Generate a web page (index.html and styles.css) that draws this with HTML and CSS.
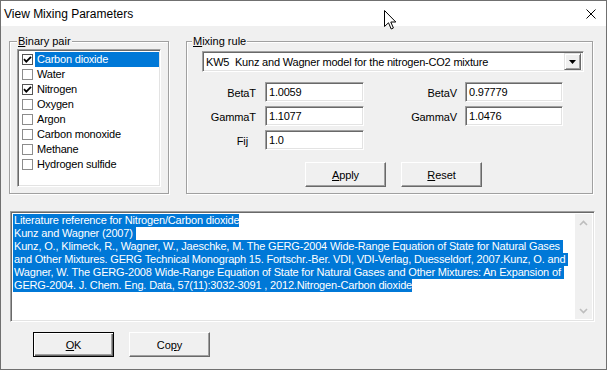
FILE: index.html
```html
<!DOCTYPE html>
<html>
<head>
<meta charset="utf-8">
<title>View Mixing Parameters</title>
<link rel="stylesheet" href="styles.css">
</head>
<body>
<div class="window">
  <div class="titlebar">
    <span class="title">View Mixing Parameters</span>
    <svg class="close" width="10" height="10" viewBox="0 0 10 10"><path d="M0.5 0.5L9.5 9.5M9.5 0.5L0.5 9.5" stroke="#000" stroke-width="1" fill="none"/></svg>
  </div>
  <div class="content">
    <div class="top">
      <fieldset class="group binary">
        <legend><u>B</u>inary pair</legend>
        <div class="listbox sunken">
          <div class="item"><span class="cb on"><svg width="9" height="9" viewBox="0 0 9 9"><path d="M1 4.2L3.3 6.6L8 1.8" stroke="#000" stroke-width="1.8" fill="none"/></svg></span><span class="itext sel">Carbon dioxide</span></div>
          <div class="item"><span class="cb"></span><span class="itext">Water</span></div>
          <div class="item"><span class="cb on"><svg width="9" height="9" viewBox="0 0 9 9"><path d="M1 4.2L3.3 6.6L8 1.8" stroke="#000" stroke-width="1.8" fill="none"/></svg></span><span class="itext">Nitrogen</span></div>
          <div class="item"><span class="cb"></span><span class="itext">Oxygen</span></div>
          <div class="item"><span class="cb"></span><span class="itext">Argon</span></div>
          <div class="item"><span class="cb"></span><span class="itext">Carbon monoxide</span></div>
          <div class="item"><span class="cb"></span><span class="itext">Methane</span></div>
          <div class="item"><span class="cb"></span><span class="itext">Hydrogen sulfide</span></div>
        </div>
      </fieldset>
      <fieldset class="group mixing">
        <legend><u>M</u>ixing rule</legend>
        <div class="combo sunken">
          <span class="combo-text">KW5&nbsp; Kunz and Wagner model for the nitrogen-CO2 mixture</span>
          <span class="combo-btn"><svg width="7" height="4" viewBox="0 0 7 4"><path d="M0 0H7L3.5 4Z" fill="#000"/></svg></span>
        </div>
        <div class="params">
          <span class="plabel">BetaT</span><span class="edit sunken">1.0059</span>
          <span class="plabel right">BetaV</span><span class="edit sunken">0.97779</span>
          <span class="plabel">GammaT</span><span class="edit sunken">1.1077</span>
          <span class="plabel right">GammaV</span><span class="edit sunken">1.0476</span>
          <span class="plabel fij">Fij</span><span class="edit sunken">1.0</span>
        </div>
        <div class="actions">
          <button class="btn"><u>A</u>pply</button>
          <button class="btn"><u>R</u>eset</button>
        </div>
      </fieldset>
    </div>
    <div class="memo sunken">
      <div class="memo-text">
        <div class="line"><span class="hl">Literature reference for Nitrogen/Carbon dioxide</span></div>
        <div class="line"><span class="hl">Kunz and Wagner (2007) </span></div>
        <div class="line"><span class="hl">Kunz, O., Klimeck, R., Wagner, W., Jaeschke, M. The GERG-2004 Wide-Range Equation of State for Natural Gases </span></div>
        <div class="line"><span class="hl">and Other Mixtures. GERG Technical Monograph 15. Fortschr.-Ber. VDI, VDI-Verlag, Duesseldorf, 2007.Kunz, O. and </span></div>
        <div class="line"><span class="hl">Wagner, W. The GERG-2008 Wide-Range Equation of State for Natural Gases and Other Mixtures: An Expansion of </span></div>
        <div class="line"><span class="hl">GERG-2004. J. Chem. Eng. Data, 57(11):3032-3091 , 2012.Nitrogen-Carbon dioxide</span></div>
      </div>
      <div class="scrollbar">
        <span class="sb-btn"><svg width="9" height="6" viewBox="0 0 9 6"><path d="M1 5L4.5 1.5L8 5" stroke="#bdbdbd" stroke-width="1.6" fill="none"/></svg></span>
        <span class="sb-btn"><svg width="9" height="6" viewBox="0 0 9 6"><path d="M1 1L4.5 4.5L8 1" stroke="#bdbdbd" stroke-width="1.6" fill="none"/></svg></span>
      </div>
    </div>
    <div class="footer">
      <button class="btn default"><u>O</u>K</button>
      <button class="btn">Co<u>p</u>y</button>
    </div>
  </div>
  <svg class="cursor" width="13" height="20" viewBox="0 0 13 20"><path d="M0.5 0.5V16.5L4.5 12.8L7.2 19L9.4 18L6.8 12H11.8Z" fill="#fff" stroke="#000" stroke-width="1" stroke-linejoin="miter"/></svg>
</div>
</body>
</html>
```
FILE: styles.css
```css
* { box-sizing: border-box; }
html, body { margin: 0; padding: 0; background: #fff; }
body {
  font-family: "Liberation Sans", Arial, sans-serif;
  font-size: 11px;
  color: #000;
}
.window {
  position: relative;
  width: 607px;
  height: 370px;
  border: 1px solid #707070;
  background: #f0f0f0;
  display: flex;
  flex-direction: column;
}
.titlebar {
  height: 25px;
  background: #fff;
  display: flex;
  align-items: center;
  justify-content: space-between;
  padding: 0 10px 0 3px;
}
.title { font-size: 12px; line-height: 14px; }
.close { display: block; margin-top: 1px; }
.content { display: flex; flex-direction: column; }
.top {
  display: flex;
  gap: 17px;
  margin: 9px 0 0 8px;
}
.sunken {
  border: 1px solid;
  border-color: #a0a0a0 #fff #fff #a0a0a0;
  box-shadow: inset 1px 1px 0 #696969, inset -1px -1px 0 #e3e3e3;
  background: #fff;
}
.group {
  margin: 0;
  padding: 0 0 6px 0;
  border: 1px solid #a0a0a0;
  box-shadow: inset 1px 1px 0 #fff, 1px 1px 0 #fff;
  min-width: 0;
}
.group legend {
  padding: 0 1px;
  line-height: 13px;
  background: #f0f0f0;
}
.binary { width: 160px; }
.binary legend { margin-left: 7px; }
.mixing { width: 407px; }
.mixing legend { margin-left: 5px; }
.listbox {
  margin: 1px 0 0 7px;
  width: 144px;
  height: 138px;
  padding: 2px 0 0 2px;
}
.item {
  height: 15px;
  display: flex;
  align-items: center;
}
.cb {
  width: 11px;
  height: 11px;
  margin-left: 2px;
  border: 1px solid #8c8c8c;
  background: #fff;
  display: flex;
  align-items: center;
  justify-content: center;
}
.cb.on { border-color: #555; }
.cb svg { display: block; }
.itext {
  margin-left: 2px;
  padding: 0 2px;
  height: 15px;
  line-height: 15px;
  letter-spacing: -0.2px;
  white-space: nowrap;
}
.itext.sel {
  flex: 1;
  margin-right: 1px;
  background: #0078d7;
  color: #fff;
}
.combo {
  margin: 3px 0 0 15px;
  width: 382px;
  height: 21px;
  display: flex;
  align-items: center;
  padding: 2px;
}
.combo-text {
  flex: 1;
  padding-left: 1px;
  letter-spacing: -0.2px;
  white-space: nowrap;
}
.combo-btn {
  width: 17px;
  height: 17px;
  background: #f0f0f0;
  border: 1px solid;
  border-color: #e3e3e3 #696969 #696969 #e3e3e3;
  box-shadow: inset 1px 1px 0 #fff, inset -1px -1px 0 #a0a0a0;
  display: flex;
  align-items: center;
  justify-content: center;
}
.combo-btn svg { display: block; }
.params {
  margin: 10px 0 0 15px;
  display: grid;
  grid-template-columns: 63px 99px 101px 98px;
  grid-auto-rows: 20px;
  row-gap: 4px;
}
.plabel {
  text-align: right;
  padding-right: 9px;
  line-height: 20px;
  padding-top: 1px;
  letter-spacing: -0.1px;
}
.plabel.right { padding-right: 8px; }
.plabel.fij { padding-right: 17px; }
.edit {
  padding: 2px 0 0 3px;
  line-height: 15px;
  letter-spacing: -0.2px;
}
.actions {
  margin: 12px 0 0 118px;
  display: flex;
  gap: 15px;
}
.btn {
  font-family: inherit;
  font-size: 11px;
  color: #000;
  width: 81px;
  height: 25px;
  padding: 0;
  margin: 0;
  background: #f0f0f0;
  border: 1px solid;
  border-color: #fff #696969 #696969 #fff;
  box-shadow: inset -1px -1px 0 #a0a0a0;
  letter-spacing: -0.1px;
}
.btn.default {
  border: 1px solid #000;
  box-shadow: inset 1px 1px 0 #fff, inset -1px -1px 0 #696969, inset -2px -2px 0 #a0a0a0;
}
.memo {
  margin: 17px 0 0 9px;
  width: 585px;
  height: 111px;
  padding: 2px;
  display: flex;
}
.memo-text { flex: 1; }
.line { height: 13px; line-height: 13px; white-space: pre; }
.hl {
  display: inline-block;
  height: 13px;
  padding-left: 1px;
  background: #0078d7;
  color: #fff;
  letter-spacing: -0.17px;
}
.scrollbar {
  width: 17px;
  background: #f0f0f0;
  display: flex;
  flex-direction: column;
  justify-content: space-between;
}
.sb-btn {
  height: 17px;
  display: flex;
  align-items: center;
  justify-content: center;
}
.sb-btn svg { display: block; }
.footer {
  margin: 10px 0 0 32px;
  display: flex;
  gap: 15px;
}
.cursor {
  position: absolute;
  left: 383px;
  top: 9px;
}
```
